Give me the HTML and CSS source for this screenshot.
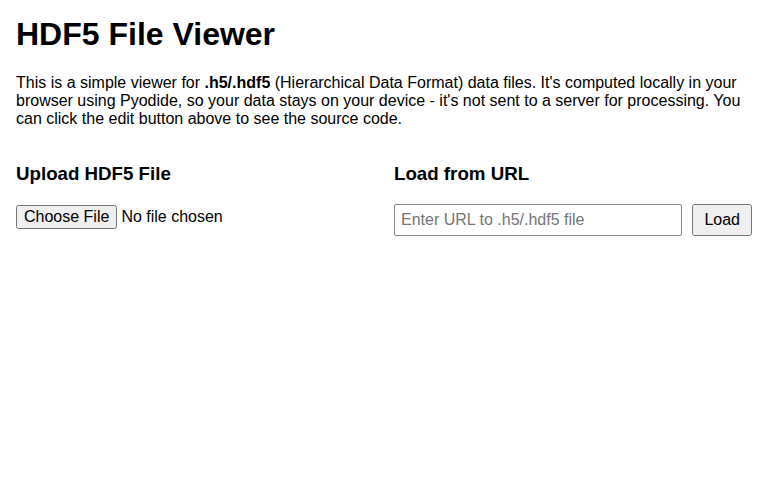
FILE: index.html
```html
<!DOCTYPE html>
<html lang="en">
<head>
<meta charset="utf-8">
    <title>HDF5 File Viewer</title>
    <link rel="stylesheet" href="styles.css">
</head>
<body>
    <h1>HDF5 File Viewer</h1>
    <p class="intro">This is a simple viewer for <strong>.h5/.hdf5</strong> (Hierarchical Data Format) data files. It's computed locally in your browser using Pyodide, so your data stays on your device - it's not sent to a server for processing. You can click the edit button above to see the source code.</p>

    <div class="loaders">
        <div class="loader">
            <h2>Upload HDF5 File</h2>
            <input type="file" id="file-input" accept=".h5,.hdf5">
        </div>
        <div class="loader">
            <h2>Load from URL</h2>
            <div class="url-row">
                <input type="text" id="url-input" placeholder="Enter URL to .h5/.hdf5 file">
                <button type="button" class="load-btn">Load</button>
            </div>
        </div>
    </div>
</body>
</html>
```

FILE: styles.css
```css
body {
    font-family: "Liberation Sans", Arial, sans-serif;
    margin: 0;
    padding: 16px;
    color: #000;
    background-color: #fff;
}
h1 {
    font-size: 32px;
    margin: 0 0 21px 0;
}
.intro {
    font-size: 16px;
    margin: 0 0 35px 0;
}
.loaders {
    display: grid;
    grid-template-columns: 1fr 1fr;
    gap: 20px;
}
.loader h2 {
    font-size: 18.72px;
    margin: 0 0 19px 0;
}
#file-input {
    font-family: "Liberation Sans", Arial, sans-serif;
    font-size: 16px;
    margin-top: 1px;
}
.url-row {
    display: flex;
    gap: 10px;
}
#url-input {
    flex: 1;
    box-sizing: border-box;
    height: 32px;
    font-family: "Liberation Sans", Arial, sans-serif;
    font-size: 16px;
    padding: 0 6px;
    border: 1px solid #888;
    border-radius: 2px;
}
.load-btn {
    font-family: "Liberation Sans", Arial, sans-serif;
    font-size: 16px;
    padding: 0 10px;
}
```
